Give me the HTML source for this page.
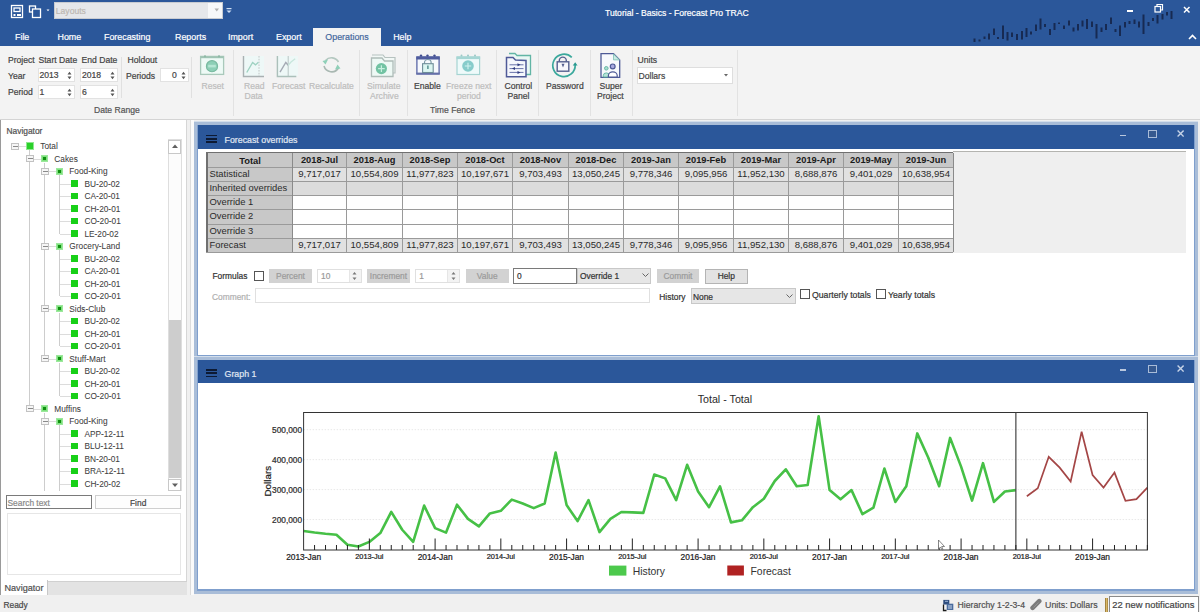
<!DOCTYPE html>
<html><head><meta charset="utf-8"><style>
*{margin:0;padding:0;box-sizing:border-box}
html,body{width:1200px;height:612px;overflow:hidden;background:#f0f0f0;font-family:'Liberation Sans', sans-serif;}
.a{position:absolute}
.t{position:absolute;white-space:nowrap;line-height:1;-webkit-text-stroke:0.2px currentColor}
.n{-webkit-text-stroke:0}
</style></head>
<body>
<div class="a" style="left:0;top:0;width:1200px;height:46px;background:#2b579a"></div>
<svg class="a" style="left:8px;top:3px" width="44" height="18" viewBox="0 0 44 18">
<g fill="none" stroke="#fff" stroke-width="1.3">
<rect x="3.5" y="2.5" width="11" height="12"/>
<rect x="6" y="5" width="6" height="3.5"/>
<rect x="21.5" y="3" width="6" height="6"/>
<rect x="24.5" y="6" width="8" height="8.5" fill="#2b579a"/>
</g>
<rect x="5.5" y="11" width="2" height="2" fill="#fff"/>
<rect x="9" y="11" width="4" height="2" fill="#fff"/>
<path d="M38.5 6.5 L41.5 6.5 L40 8.3 Z" fill="#fff"/>
</svg>
<div class="a" style="left:54px;top:2px;width:169px;height:16.5px;background:#e5e7ea;border:1px solid #c8ccd2"></div>
<div class="a" style="left:208px;top:3px;width:14px;height:14.5px;background:#f7f8f9"></div>
<div class="t" style="left:55.8px;top:7.3px;font-size:8.6px;color:#bdb8b2">Layouts</div>
<svg class="a" style="left:214px;top:8px" width="6" height="4"><path d="M0.5 0.5 L5 0.5 L2.75 3.5Z" fill="#b0b0b0"/></svg>
<svg class="a" style="left:226px;top:7px" width="7" height="7"><rect x="0.5" y="1" width="5" height="1.2" fill="#cfe0f5"/><path d="M0.5 3.5 L5.5 3.5 L3 6Z" fill="#cfe0f5"/></svg>
<div class="t" style="left:605px;top:9.1px;font-size:8.6px;color:#fff">Tutorial - Basics - Forecast Pro TRAC</div>
<div class="a" style="left:1126.5px;top:10px;width:6.5px;height:1.5px;background:#fff"></div>
<svg class="a" style="left:1154px;top:3px" width="10" height="10"><g fill="none" stroke="#fff" stroke-width="1.2"><rect x="1" y="3.5" width="5.5" height="5.5"/><path d="M3 3.5 V1.5 H8.5 V7 H6.5"/></g></svg>
<svg class="a" style="left:1183px;top:5.5px" width="8" height="8"><path d="M1 1 L6.5 6.5 M6.5 1 L1 6.5" stroke="#fff" stroke-width="1.5"/></svg>
<svg class="a" style="left:1188px;top:34px" width="9" height="6"><path d="M1 5 L4.5 1.5 L8 5" fill="none" stroke="#fff" stroke-width="1.6"/></svg>
<svg class="a" style="left:960px;top:0px" width="220" height="46"><rect x="13.5" y="38.5" width="2" height="3.5" fill="#172a52"/><rect x="18.5" y="39.5" width="2" height="2.0" fill="#172a52"/><rect x="23.5" y="36.5" width="2" height="2.5" fill="#172a52"/><rect x="28.0" y="33.5" width="2" height="6.0" fill="#172a52"/><rect x="33.0" y="28.5" width="2" height="6.5" fill="#172a52"/><rect x="37.0" y="37.0" width="2" height="2.0" fill="#172a52"/><rect x="42.0" y="25.5" width="2" height="13.5" fill="#172a52"/><rect x="46.5" y="32.0" width="2" height="8.5" fill="#172a52"/><rect x="51.0" y="32.5" width="2" height="4.5" fill="#172a52"/><rect x="56.0" y="34.0" width="2" height="6.0" fill="#172a52"/><rect x="61.0" y="31.0" width="2" height="8.5" fill="#172a52"/><rect x="65.5" y="28.0" width="2" height="9.0" fill="#172a52"/><rect x="70.0" y="31.5" width="2" height="3.0" fill="#172a52"/><rect x="75.0" y="24.5" width="2" height="6.5" fill="#172a52"/><rect x="79.5" y="18.5" width="2" height="11.0" fill="#172a52"/><rect x="84.0" y="24.0" width="2" height="3.0" fill="#172a52"/><rect x="89.0" y="29.0" width="2" height="6.0" fill="#172a52"/><rect x="93.5" y="23.0" width="2" height="7.0" fill="#172a52"/><rect x="98.0" y="22.5" width="2" height="1.5" fill="#172a52"/><rect x="103.0" y="25.5" width="2" height="3.5" fill="#172a52"/><rect x="108.0" y="20.5" width="2" height="5.0" fill="#172a52"/><rect x="112.5" y="27.5" width="2" height="4.0" fill="#172a52"/><rect x="117.0" y="24.0" width="2" height="6.5" fill="#172a52"/><rect x="121.5" y="20.5" width="2" height="6.0" fill="#172a52"/><rect x="126.0" y="19.0" width="2" height="10.0" fill="#172a52"/><rect x="131.0" y="21.5" width="2" height="5.5" fill="#172a52"/><rect x="135.5" y="24.0" width="2" height="14.5" fill="#172a52"/><rect x="140.5" y="27.5" width="2" height="4.5" fill="#172a52"/><rect x="145.0" y="24.0" width="2" height="6.0" fill="#172a52"/><rect x="150.0" y="17.5" width="2" height="6.5" fill="#172a52"/><rect x="154.5" y="29.0" width="2" height="3.0" fill="#172a52"/><rect x="159.0" y="25.5" width="2" height="10.5" fill="#172a52"/><rect x="164.0" y="22.0" width="2" height="5.5" fill="#172a52"/><rect x="168.5" y="21.0" width="2" height="3.0" fill="#172a52"/><rect x="173.5" y="19.5" width="2" height="4.5" fill="#172a52"/><rect x="178.0" y="21.5" width="2" height="6.0" fill="#172a52"/><rect x="182.5" y="14.5" width="2" height="19.5" fill="#172a52"/><rect x="187.5" y="22.0" width="2" height="4.0" fill="#172a52"/><rect x="192.0" y="18.0" width="2" height="3.0" fill="#172a52"/><rect x="196.5" y="15.0" width="2" height="8.5" fill="#172a52"/><rect x="201.5" y="14.0" width="2" height="5.5" fill="#172a52"/><rect x="206.0" y="12.0" width="2" height="3.5" fill="#172a52"/><rect x="210.5" y="11.0" width="2" height="8.0" fill="#172a52"/></svg>
<div class="t" style="left:15px;top:33.3px;font-size:8.9px;color:#fff">File</div>
<div class="t" style="left:57.5px;top:33.3px;font-size:8.9px;color:#fff">Home</div>
<div class="t" style="left:104px;top:33.3px;font-size:8.9px;color:#fff">Forecasting</div>
<div class="t" style="left:175px;top:33.3px;font-size:8.9px;color:#fff">Reports</div>
<div class="t" style="left:228px;top:33.3px;font-size:8.9px;color:#fff">Import</div>
<div class="t" style="left:276px;top:33.3px;font-size:8.9px;color:#fff">Export</div>
<div class="t" style="left:393.2px;top:33.3px;font-size:8.9px;color:#fff">Help</div>
<div class="a" style="left:313px;top:28.1px;width:68px;height:19px;background:#f3f3f3"></div>
<div class="t" style="left:325.3px;top:33.3px;font-size:8.9px;color:#45689e">Operations</div>
<div class="a" style="left:0;top:46px;width:1200px;height:73px;background:#f3f3f3"></div>
<div class="a" style="left:0;top:119px;width:1200px;height:1px;background:#d4d4d4"></div>
<div class="t" style="left:8px;top:55.5px;font-size:8.6px;color:#444;font-weight:400;">Project</div>
<div class="t" style="left:38.5px;top:55.5px;font-size:8.6px;color:#444;font-weight:400;">Start Date</div>
<div class="t" style="left:81.5px;top:55.5px;font-size:8.6px;color:#444;font-weight:400;">End Date</div>
<div class="t" style="left:8px;top:72.2px;font-size:8.6px;color:#444;font-weight:400;">Year</div>
<div class="t" style="left:8px;top:88.3px;font-size:8.6px;color:#444;font-weight:400;">Period</div>
<div class="a" style="left:37.5px;top:67.8px;width:37px;height:14px;background:#fff;border:1px solid #e2e2e2"></div>
<div class="t" style="left:39.5px;top:71.3px;font-size:8.6px;color:#444;font-weight:400;">2013</div>
<svg class="a" style="left:66.5px;top:70.8px" width="5" height="9"><path d="M0.5 3.5 L4.5 3.5 L2.5 0.8Z M0.5 5.5 L4.5 5.5 L2.5 8.2Z" fill="#555"/></svg>
<div class="a" style="left:80px;top:67.8px;width:38px;height:14px;background:#fff;border:1px solid #e2e2e2"></div>
<div class="t" style="left:82px;top:71.3px;font-size:8.6px;color:#444;font-weight:400;">2018</div>
<svg class="a" style="left:110px;top:70.8px" width="5" height="9"><path d="M0.5 3.5 L4.5 3.5 L2.5 0.8Z M0.5 5.5 L4.5 5.5 L2.5 8.2Z" fill="#555"/></svg>
<div class="a" style="left:37.5px;top:84.8px;width:37px;height:14px;background:#fff;border:1px solid #e2e2e2"></div>
<div class="t" style="left:39.5px;top:88.3px;font-size:8.6px;color:#444;font-weight:400;">1</div>
<svg class="a" style="left:66.5px;top:87.8px" width="5" height="9"><path d="M0.5 3.5 L4.5 3.5 L2.5 0.8Z M0.5 5.5 L4.5 5.5 L2.5 8.2Z" fill="#555"/></svg>
<div class="a" style="left:80px;top:84.8px;width:38px;height:14px;background:#fff;border:1px solid #e2e2e2"></div>
<div class="t" style="left:82px;top:88.3px;font-size:8.6px;color:#444;font-weight:400;">6</div>
<svg class="a" style="left:110px;top:87.8px" width="5" height="9"><path d="M0.5 3.5 L4.5 3.5 L2.5 0.8Z M0.5 5.5 L4.5 5.5 L2.5 8.2Z" fill="#555"/></svg>
<div class="a" style="left:121px;top:57px;width:1px;height:41px;background:#e0e0e0"></div>
<div class="t" style="left:127.5px;top:55.5px;font-size:8.6px;color:#444;font-weight:400;">Holdout</div>
<div class="t" style="left:126px;top:72.2px;font-size:8.6px;color:#444;font-weight:400;">Periods</div>
<div class="a" style="left:159.5px;top:67.8px;width:29px;height:14px;background:#fff;border:1px solid #e2e2e2"></div>
<div class="t" style="left:172.0px;top:71.3px;font-size:8.6px;color:#444;font-weight:400;">0</div>
<svg class="a" style="left:180.5px;top:70.8px" width="5" height="9"><path d="M0.5 3.5 L4.5 3.5 L2.5 0.8Z M0.5 5.5 L4.5 5.5 L2.5 8.2Z" fill="#555"/></svg>
<div class="a" style="left:191px;top:57px;width:1px;height:41px;background:#e0e0e0"></div>
<div class="t" style="left:94px;top:106px;font-size:8.6px;color:#555;font-weight:400;">Date Range</div>
<div class="a" style="left:233px;top:50px;width:1px;height:66px;background:#e2e2e2"></div>
<div class="a" style="left:359px;top:50px;width:1px;height:66px;background:#e2e2e2"></div>
<div class="a" style="left:407px;top:50px;width:1px;height:66px;background:#e2e2e2"></div>
<div class="a" style="left:496px;top:50px;width:1px;height:66px;background:#e2e2e2"></div>
<div class="a" style="left:538px;top:50px;width:1px;height:66px;background:#e2e2e2"></div>
<div class="a" style="left:589.5px;top:50px;width:1px;height:66px;background:#e2e2e2"></div>
<div class="a" style="left:631.5px;top:50px;width:1px;height:66px;background:#e2e2e2"></div>
<div class="a" style="left:736.5px;top:50px;width:1px;height:66px;background:#e2e2e2"></div>
<div class="t" style="left:201.5px;top:82px;font-size:8.6px;color:#bdbdbd;font-weight:400;">Reset</div>
<div class="t" style="left:244px;top:82px;font-size:8.6px;color:#bdbdbd;font-weight:400;">Read</div>
<div class="t" style="left:244.5px;top:92px;font-size:8.6px;color:#bdbdbd;font-weight:400;">Data</div>
<div class="t" style="left:272px;top:82px;font-size:8.6px;color:#bdbdbd;font-weight:400;">Forecast</div>
<div class="t" style="left:309px;top:82px;font-size:8.6px;color:#bdbdbd;font-weight:400;">Recalculate</div>
<div class="t" style="left:367px;top:82px;font-size:8.6px;color:#bdbdbd;font-weight:400;">Simulate</div>
<div class="t" style="left:370px;top:92px;font-size:8.6px;color:#bdbdbd;font-weight:400;">Archive</div>
<div class="t" style="left:414px;top:82px;font-size:8.6px;color:#444;font-weight:400;">Enable</div>
<div class="t" style="left:446px;top:82px;font-size:8.6px;color:#bdbdbd;font-weight:400;">Freeze next</div>
<div class="t" style="left:457px;top:92px;font-size:8.6px;color:#bdbdbd;font-weight:400;">period</div>
<div class="t" style="left:430px;top:106px;font-size:8.6px;color:#555;font-weight:400;">Time Fence</div>
<div class="t" style="left:504.5px;top:82px;font-size:8.6px;color:#444;font-weight:400;">Control</div>
<div class="t" style="left:507.5px;top:92px;font-size:8.6px;color:#444;font-weight:400;">Panel</div>
<div class="t" style="left:546px;top:82px;font-size:8.6px;color:#444;font-weight:400;">Password</div>
<div class="t" style="left:599.5px;top:82px;font-size:8.6px;color:#444;font-weight:400;">Super</div>
<div class="t" style="left:597px;top:92px;font-size:8.6px;color:#444;font-weight:400;">Project</div>
<div class="t" style="left:637.5px;top:55.5px;font-size:8.6px;color:#444;font-weight:400;">Units</div>
<div class="a" style="left:636.5px;top:67px;width:96px;height:17px;background:#fff;border:1px solid #dedede"></div>
<div class="t" style="left:638.5px;top:71.5px;font-size:8.6px;color:#444;font-weight:400;">Dollars</div>
<svg class="a" style="left:724px;top:74px" width="5" height="3"><path d="M0 0 L4 0 L2 2.5Z" fill="#666"/></svg>
<svg class="a" style="left:199px;top:54px" width="26" height="22" viewBox="0 0 26 22">
<rect x="1.6" y="2.4" width="23" height="18" fill="#eefaf6" stroke="#a9c9bb" stroke-width="1.3"/>
<rect x="1.6" y="2.4" width="23" height="1.8" fill="#9fc4b4"/>
<circle cx="6" cy="2.3" r="1.1" fill="#8fb8a6"/><circle cx="20" cy="2.3" r="1.1" fill="#8fb8a6"/>
<circle cx="13" cy="12.2" r="5.6" fill="#8ccfb6"/>
<circle cx="13" cy="12.2" r="5.6" fill="none" stroke="#79b9a0" stroke-width="1.1"/>
<rect x="9.2" y="10.8" width="7.6" height="2.6" fill="#b6e6d4"/>
</svg>
<svg class="a" style="left:238px;top:50px" width="70" height="30" viewBox="0 0 70 30">
<rect x="6" y="6" width="20" height="20" fill="#eef8f7"/>
<path d="M21 6 V26" stroke="#c0c6c6" stroke-width="1" stroke-dasharray="1.6 1.2"/>
<path d="M8.75 22.5 L14.6 12.5 L17.5 14.9 L20.4 12.25" fill="none" stroke="#9fd2c2" stroke-width="1.4"/>
<path d="M5.5 6 V26.5 H26" fill="none" stroke="#a9b0b2" stroke-width="1.4"/>
<rect x="40" y="6" width="20" height="20" fill="#eef8f7"/>
<path d="M50.2 6 V26" stroke="#b9c6c4" stroke-width="1"/>
<path d="M42 22.2 L47.8 12.5 L50.2 15.2" fill="none" stroke="#a4aab4" stroke-width="1.4"/>
<path d="M50.2 15.2 L53 12 L57.2 8.75" fill="none" stroke="#c7e6dc" stroke-width="1.3"/>
<path d="M39.4 6 V26.5 H58.3" fill="none" stroke="#abc0ba" stroke-width="1.4"/>
</svg>
<svg class="a" style="left:312px;top:48px" width="90" height="32" viewBox="0 0 90 32">
<path d="M13.5 12.5 A8 8 0 0 1 26.5 14" fill="none" stroke="#b4c8c0" stroke-width="1.6"/>
<path d="M26.5 20 A8 8 0 0 1 12 18" fill="none" stroke="#a9b8b2" stroke-width="1.6"/>
<path d="M10.5 13 L16 11.5 L13.5 16.5Z" fill="#8fd0b8"/>
<path d="M28.5 20.5 L23 21.5 L25.5 16.5Z" fill="#8fd0b8"/>
<path d="M60 7 H71 L73 9.5 H83 V25 H72" fill="#f2f8f6" stroke="#b6c2bf" stroke-width="1.2"/>
<path d="M59.5 10 H70 L72.5 13 H81 V28.5 H59.5Z" fill="#eef9f5" stroke="#aebcb8" stroke-width="1.3"/>
<circle cx="69.4" cy="20.6" r="5.6" fill="#72c3a3"/>
<path d="M69.4 17.3 V23.9 M66.1 20.6 H72.7" stroke="#c8f0e0" stroke-width="1.2"/>
</svg>
<svg class="a" style="left:410px;top:50px" width="80" height="30" viewBox="0 0 80 30">
<rect x="6.9" y="7" width="22.2" height="17" fill="#f6f9fd" stroke="#5a66a6" stroke-width="1.3"/>
<rect x="6.3" y="6.5" width="23.4" height="3" fill="#4f5c9e"/>
<rect x="6.3" y="22.6" width="23.4" height="1.8" fill="#6570a8"/>
<circle cx="11" cy="5.6" r="1.2" fill="#3f4c8e"/><circle cx="17.5" cy="5.6" r="1.2" fill="#3f4c8e"/><circle cx="24.5" cy="5.6" r="1.2" fill="#3f4c8e"/>
<path d="M14.5 13.7 V12.5 A3.3 3 0 0 1 21.1 12.5 V13.7" fill="none" stroke="#7a9aa6" stroke-width="1.2"/>
<rect x="12.6" y="13.7" width="10.6" height="8.8" fill="#dcf6f2" stroke="#6d8c98" stroke-width="1.1"/>
<path d="M17.9 15.5 V19" stroke="#4d8a8a" stroke-width="1.4"/>
<rect x="47" y="7" width="22.6" height="17.5" fill="#eefafa" stroke="#a6d4d2" stroke-width="1.2"/>
<rect x="46.5" y="6.5" width="23.6" height="2.6" fill="#a6d6d4"/>
<circle cx="51.5" cy="5.6" r="1" fill="#9cc8c6"/><circle cx="58" cy="5.6" r="1" fill="#9cc8c6"/><circle cx="65" cy="5.6" r="1" fill="#9cc8c6"/>
<circle cx="58" cy="16" r="5.8" fill="#86cccb"/>
<path d="M58 12.8 V19.2 M54.8 16 H61.2" stroke="#d0f2f0" stroke-width="1.1"/>
</svg>
<svg class="a" style="left:504px;top:52px" width="30" height="26" viewBox="0 0 30 26">
<path d="M5 1.5 H11 L13 3.5 H26.5 V22.5 H22" fill="#e9f7f4" stroke="#62b5a5" stroke-width="1.3"/>
<path d="M2.5 5.5 H9 L11.5 8 L22 8.5 V24.8 H2.5Z" fill="#f5f7fc" stroke="#4f5a98" stroke-width="1.5"/>
<path d="M5.5 12.8 H19.5 M5.5 16.6 H19.5 M5.5 20.4 H19.5" stroke="#5a64a0" stroke-width="0.9"/>
<path d="M13.5 11.3 L16.5 12.8 L13.5 14.3Z M11 15.1 L8 16.6 L11 18.1Z M13.5 18.9 L16.5 20.4 L13.5 21.9Z" fill="#2e3a7e"/>
</svg>
<svg class="a" style="left:545px;top:50px" width="80" height="30" viewBox="0 0 80 30">
<path d="M26.78 7.34 A11.2 11.2 0 1 0 30.18 14.81" fill="none" stroke="#3aa89c" stroke-width="1.7"/>
<path d="M27.78 15.61 L30.18 12.21 L32.58 15.61Z" fill="#2a9a90"/>
<path d="M14.3 11.8 V10.6 A3.5 3.5 0 0 1 21.3 10.6 V11.8" fill="none" stroke="#55608f" stroke-width="1.4"/>
<rect x="12.2" y="11.8" width="11.6" height="9.4" fill="#f8f8fc" stroke="#55608f" stroke-width="1.4"/>
<path d="M16.5 13.8 H19.5 L18 17.5Z" fill="#55608f"/>
<path d="M56 3.7 H68.5 L74.7 9.9 V27.3 H56Z" fill="#f7f9fc" stroke="#4e5a96" stroke-width="1.3"/>
<path d="M68.5 4 V9.9 H74.5Z" fill="#c9ebe4" stroke="#7cc0b2" stroke-width="0.8"/>
<circle cx="61.3" cy="18.3" r="1.8" fill="#a6dccd" stroke="#5fb3a2" stroke-width="0.9"/>
<path d="M58.3 27 V25.5 A3 2.6 0 0 1 64.3 25.5 V27Z" fill="#b7e4d8" stroke="#5fb3a2" stroke-width="0.9"/>
<circle cx="67.7" cy="16.4" r="2.4" fill="#a9a9e0" stroke="#4e5a96" stroke-width="1.2"/>
<path d="M63.4 27 V25.6 A4.4 3.8 0 0 1 72.2 25.6 V27Z" fill="#ffffff" stroke="#4e5a96" stroke-width="1.2"/>
</svg>
<div class="a" style="left:0;top:120px;width:186.3px;height:461px;background:#fff;border-left:1px solid #a0a0a0"></div>
<div class="a" style="left:186px;top:120px;width:1px;height:475px;background:#d6d6d6"></div>
<div class="a" style="left:190px;top:120px;width:1px;height:475px;background:#dcdcdc"></div>
<div class="a" style="left:191px;top:120px;width:3px;height:475px;background:#fafafa"></div>
<div class="t" style="left:6.5px;top:127px;font-size:8.4px;color:#505050;font-weight:400;">Navigator</div>
<div class="a" style="left:1px;top:138px;width:166px;height:353px;overflow:hidden"><div class="a" style="left:27.8px;top:12px;width:1px;height:258.5px;background:#cdcdcd"></div><div class="a" style="left:42.8px;top:24.5px;width:1px;height:196.0px;background:#cdcdcd"></div><div class="a" style="left:42.8px;top:274.5px;width:1px;height:187.5px;background:#cdcdcd"></div><div class="a" style="left:57.8px;top:37.0px;width:1px;height:58.5px;background:#cdcdcd"></div><div class="a" style="left:57.8px;top:112.0px;width:1px;height:46.0px;background:#cdcdcd"></div><div class="a" style="left:57.8px;top:174.5px;width:1px;height:33.5px;background:#cdcdcd"></div><div class="a" style="left:57.8px;top:224.5px;width:1px;height:33.5px;background:#cdcdcd"></div><div class="a" style="left:57.8px;top:287.0px;width:1px;height:175.0px;background:#cdcdcd"></div><div class="a" style="left:18px;top:8.0px;width:6.5px;height:1px;background:#dcdcdc"></div><div class="a" style="left:10px;top:4.5px;width:8px;height:7px;background:#f6f6f6;border:1px solid #c2c2c2"></div><div class="a" style="left:11.5px;top:7.5px;width:5px;height:1px;background:#8a8a8a"></div><div class="a" style="left:24.5px;top:4.199999999999989px;width:8px;height:7.5px;background:#2ad02a;border:1px solid #8fe88f"></div><div class="t" style="left:39.3px;top:4.199999999999989px;font-size:8.3px;color:#404040;-webkit-text-stroke:0.05px #404040">Total</div><div class="a" style="left:33px;top:20.5px;width:6.5px;height:1px;background:#dcdcdc"></div><div class="a" style="left:25px;top:17.0px;width:8px;height:7px;background:#f6f6f6;border:1px solid #c2c2c2"></div><div class="a" style="left:26.5px;top:20.0px;width:5px;height:1px;background:#8a8a8a"></div><div class="a" style="left:39.7px;top:17.0px;width:7.5px;height:7px;background:#7ee07e;border:1px solid #9ce89c"></div><div class="a" style="left:42.0px;top:19.0px;width:3px;height:3px;background:#109010"></div><div class="t" style="left:53.3px;top:16.69999999999999px;font-size:8.3px;color:#404040;-webkit-text-stroke:0.05px #404040">Cakes</div><div class="a" style="left:48px;top:33.0px;width:6.5px;height:1px;background:#dcdcdc"></div><div class="a" style="left:40px;top:29.5px;width:8px;height:7px;background:#f6f6f6;border:1px solid #c2c2c2"></div><div class="a" style="left:41.5px;top:32.5px;width:5px;height:1px;background:#8a8a8a"></div><div class="a" style="left:54.7px;top:29.5px;width:7.5px;height:7px;background:#7ee07e;border:1px solid #9ce89c"></div><div class="a" style="left:57.0px;top:31.5px;width:3px;height:3px;background:#109010"></div><div class="t" style="left:68.3px;top:29.19999999999999px;font-size:8.3px;color:#404040;-webkit-text-stroke:0.05px #404040">Food-King</div><div class="a" style="left:58.5px;top:45.5px;width:11.099999999999994px;height:1px;background:#dcdcdc"></div><div class="a" style="left:70.1px;top:42.30000000000001px;width:7px;height:6.5px;background:#18d018"></div><div class="t" style="left:83.4px;top:41.69999999999999px;font-size:8.3px;color:#404040;-webkit-text-stroke:0.05px #404040">BU-20-02</div><div class="a" style="left:58.5px;top:58.0px;width:11.099999999999994px;height:1px;background:#dcdcdc"></div><div class="a" style="left:70.1px;top:54.80000000000001px;width:7px;height:6.5px;background:#18d018"></div><div class="t" style="left:83.4px;top:54.19999999999999px;font-size:8.3px;color:#404040;-webkit-text-stroke:0.05px #404040">CA-20-01</div><div class="a" style="left:58.5px;top:70.5px;width:11.099999999999994px;height:1px;background:#dcdcdc"></div><div class="a" style="left:70.1px;top:67.30000000000001px;width:7px;height:6.5px;background:#18d018"></div><div class="t" style="left:83.4px;top:66.69999999999999px;font-size:8.3px;color:#404040;-webkit-text-stroke:0.05px #404040">CH-20-01</div><div class="a" style="left:58.5px;top:83.0px;width:11.099999999999994px;height:1px;background:#dcdcdc"></div><div class="a" style="left:70.1px;top:79.80000000000001px;width:7px;height:6.5px;background:#18d018"></div><div class="t" style="left:83.4px;top:79.19999999999999px;font-size:8.3px;color:#404040;-webkit-text-stroke:0.05px #404040">CO-20-01</div><div class="a" style="left:58.5px;top:95.5px;width:11.099999999999994px;height:1px;background:#dcdcdc"></div><div class="a" style="left:70.1px;top:92.30000000000001px;width:7px;height:6.5px;background:#18d018"></div><div class="t" style="left:83.4px;top:91.69999999999999px;font-size:8.3px;color:#404040;-webkit-text-stroke:0.05px #404040">LE-20-02</div><div class="a" style="left:48px;top:108.0px;width:6.5px;height:1px;background:#dcdcdc"></div><div class="a" style="left:40px;top:104.5px;width:8px;height:7px;background:#f6f6f6;border:1px solid #c2c2c2"></div><div class="a" style="left:41.5px;top:107.5px;width:5px;height:1px;background:#8a8a8a"></div><div class="a" style="left:54.7px;top:104.5px;width:7.5px;height:7px;background:#7ee07e;border:1px solid #9ce89c"></div><div class="a" style="left:57.0px;top:106.5px;width:3px;height:3px;background:#109010"></div><div class="t" style="left:68.3px;top:104.19999999999999px;font-size:8.3px;color:#404040;-webkit-text-stroke:0.05px #404040">Grocery-Land</div><div class="a" style="left:58.5px;top:120.5px;width:11.099999999999994px;height:1px;background:#dcdcdc"></div><div class="a" style="left:70.1px;top:117.30000000000001px;width:7px;height:6.5px;background:#18d018"></div><div class="t" style="left:83.4px;top:116.69999999999999px;font-size:8.3px;color:#404040;-webkit-text-stroke:0.05px #404040">BU-20-02</div><div class="a" style="left:58.5px;top:133.0px;width:11.099999999999994px;height:1px;background:#dcdcdc"></div><div class="a" style="left:70.1px;top:129.8px;width:7px;height:6.5px;background:#18d018"></div><div class="t" style="left:83.4px;top:129.2px;font-size:8.3px;color:#404040;-webkit-text-stroke:0.05px #404040">CA-20-01</div><div class="a" style="left:58.5px;top:145.5px;width:11.099999999999994px;height:1px;background:#dcdcdc"></div><div class="a" style="left:70.1px;top:142.3px;width:7px;height:6.5px;background:#18d018"></div><div class="t" style="left:83.4px;top:141.7px;font-size:8.3px;color:#404040;-webkit-text-stroke:0.05px #404040">CH-20-01</div><div class="a" style="left:58.5px;top:158.0px;width:11.099999999999994px;height:1px;background:#dcdcdc"></div><div class="a" style="left:70.1px;top:154.8px;width:7px;height:6.5px;background:#18d018"></div><div class="t" style="left:83.4px;top:154.2px;font-size:8.3px;color:#404040;-webkit-text-stroke:0.05px #404040">CO-20-01</div><div class="a" style="left:48px;top:170.5px;width:6.5px;height:1px;background:#dcdcdc"></div><div class="a" style="left:40px;top:167.0px;width:8px;height:7px;background:#f6f6f6;border:1px solid #c2c2c2"></div><div class="a" style="left:41.5px;top:170.0px;width:5px;height:1px;background:#8a8a8a"></div><div class="a" style="left:54.7px;top:167.0px;width:7.5px;height:7px;background:#7ee07e;border:1px solid #9ce89c"></div><div class="a" style="left:57.0px;top:169.0px;width:3px;height:3px;background:#109010"></div><div class="t" style="left:68.3px;top:166.7px;font-size:8.3px;color:#404040;-webkit-text-stroke:0.05px #404040">Sids-Club</div><div class="a" style="left:58.5px;top:183.0px;width:11.099999999999994px;height:1px;background:#dcdcdc"></div><div class="a" style="left:70.1px;top:179.8px;width:7px;height:6.5px;background:#18d018"></div><div class="t" style="left:83.4px;top:179.2px;font-size:8.3px;color:#404040;-webkit-text-stroke:0.05px #404040">BU-20-02</div><div class="a" style="left:58.5px;top:195.5px;width:11.099999999999994px;height:1px;background:#dcdcdc"></div><div class="a" style="left:70.1px;top:192.3px;width:7px;height:6.5px;background:#18d018"></div><div class="t" style="left:83.4px;top:191.7px;font-size:8.3px;color:#404040;-webkit-text-stroke:0.05px #404040">CH-20-01</div><div class="a" style="left:58.5px;top:208.0px;width:11.099999999999994px;height:1px;background:#dcdcdc"></div><div class="a" style="left:70.1px;top:204.8px;width:7px;height:6.5px;background:#18d018"></div><div class="t" style="left:83.4px;top:204.2px;font-size:8.3px;color:#404040;-webkit-text-stroke:0.05px #404040">CO-20-01</div><div class="a" style="left:48px;top:220.5px;width:6.5px;height:1px;background:#dcdcdc"></div><div class="a" style="left:40px;top:217.0px;width:8px;height:7px;background:#f6f6f6;border:1px solid #c2c2c2"></div><div class="a" style="left:41.5px;top:220.0px;width:5px;height:1px;background:#8a8a8a"></div><div class="a" style="left:54.7px;top:217.0px;width:7.5px;height:7px;background:#7ee07e;border:1px solid #9ce89c"></div><div class="a" style="left:57.0px;top:219.0px;width:3px;height:3px;background:#109010"></div><div class="t" style="left:68.3px;top:216.7px;font-size:8.3px;color:#404040;-webkit-text-stroke:0.05px #404040">Stuff-Mart</div><div class="a" style="left:58.5px;top:233.0px;width:11.099999999999994px;height:1px;background:#dcdcdc"></div><div class="a" style="left:70.1px;top:229.8px;width:7px;height:6.5px;background:#18d018"></div><div class="t" style="left:83.4px;top:229.2px;font-size:8.3px;color:#404040;-webkit-text-stroke:0.05px #404040">BU-20-02</div><div class="a" style="left:58.5px;top:245.5px;width:11.099999999999994px;height:1px;background:#dcdcdc"></div><div class="a" style="left:70.1px;top:242.3px;width:7px;height:6.5px;background:#18d018"></div><div class="t" style="left:83.4px;top:241.7px;font-size:8.3px;color:#404040;-webkit-text-stroke:0.05px #404040">CH-20-01</div><div class="a" style="left:58.5px;top:258.0px;width:11.099999999999994px;height:1px;background:#dcdcdc"></div><div class="a" style="left:70.1px;top:254.8px;width:7px;height:6.5px;background:#18d018"></div><div class="t" style="left:83.4px;top:254.2px;font-size:8.3px;color:#404040;-webkit-text-stroke:0.05px #404040">CO-20-01</div><div class="a" style="left:33px;top:270.5px;width:6.5px;height:1px;background:#dcdcdc"></div><div class="a" style="left:25px;top:267.0px;width:8px;height:7px;background:#f6f6f6;border:1px solid #c2c2c2"></div><div class="a" style="left:26.5px;top:270.0px;width:5px;height:1px;background:#8a8a8a"></div><div class="a" style="left:39.7px;top:267.0px;width:7.5px;height:7px;background:#7ee07e;border:1px solid #9ce89c"></div><div class="a" style="left:42.0px;top:269.0px;width:3px;height:3px;background:#109010"></div><div class="t" style="left:53.3px;top:266.7px;font-size:8.3px;color:#404040;-webkit-text-stroke:0.05px #404040">Muffins</div><div class="a" style="left:48px;top:283.0px;width:6.5px;height:1px;background:#dcdcdc"></div><div class="a" style="left:40px;top:279.5px;width:8px;height:7px;background:#f6f6f6;border:1px solid #c2c2c2"></div><div class="a" style="left:41.5px;top:282.5px;width:5px;height:1px;background:#8a8a8a"></div><div class="a" style="left:54.7px;top:279.5px;width:7.5px;height:7px;background:#7ee07e;border:1px solid #9ce89c"></div><div class="a" style="left:57.0px;top:281.5px;width:3px;height:3px;background:#109010"></div><div class="t" style="left:68.3px;top:279.2px;font-size:8.3px;color:#404040;-webkit-text-stroke:0.05px #404040">Food-King</div><div class="a" style="left:58.5px;top:295.5px;width:11.099999999999994px;height:1px;background:#dcdcdc"></div><div class="a" style="left:70.1px;top:292.3px;width:7px;height:6.5px;background:#18d018"></div><div class="t" style="left:83.4px;top:291.7px;font-size:8.3px;color:#404040;-webkit-text-stroke:0.05px #404040">APP-12-11</div><div class="a" style="left:58.5px;top:308.0px;width:11.099999999999994px;height:1px;background:#dcdcdc"></div><div class="a" style="left:70.1px;top:304.8px;width:7px;height:6.5px;background:#18d018"></div><div class="t" style="left:83.4px;top:304.2px;font-size:8.3px;color:#404040;-webkit-text-stroke:0.05px #404040">BLU-12-11</div><div class="a" style="left:58.5px;top:320.5px;width:11.099999999999994px;height:1px;background:#dcdcdc"></div><div class="a" style="left:70.1px;top:317.3px;width:7px;height:6.5px;background:#18d018"></div><div class="t" style="left:83.4px;top:316.7px;font-size:8.3px;color:#404040;-webkit-text-stroke:0.05px #404040">BN-20-01</div><div class="a" style="left:58.5px;top:333.0px;width:11.099999999999994px;height:1px;background:#dcdcdc"></div><div class="a" style="left:70.1px;top:329.8px;width:7px;height:6.5px;background:#18d018"></div><div class="t" style="left:83.4px;top:329.2px;font-size:8.3px;color:#404040;-webkit-text-stroke:0.05px #404040">BRA-12-11</div><div class="a" style="left:58.5px;top:345.5px;width:11.099999999999994px;height:1px;background:#dcdcdc"></div><div class="a" style="left:70.1px;top:342.3px;width:7px;height:6.5px;background:#18d018"></div><div class="t" style="left:83.4px;top:341.7px;font-size:8.3px;color:#404040;-webkit-text-stroke:0.05px #404040">CH-20-02</div></div>
<div class="a" style="left:167.5px;top:139px;width:14px;height:352px;background:#fcfcfc;border:1px solid #dedede"></div>
<div class="a" style="left:168.5px;top:320px;width:12px;height:158px;background:#cdcdcd"></div>
<div class="a" style="left:168px;top:139.5px;width:13px;height:14px;background:#fff;border:1px solid #c8c8c8"></div>
<svg class="a" style="left:171.5px;top:144px" width="7" height="5"><path d="M0 4 L6 4 L3 0.5Z" fill="#606060"/></svg>
<div class="a" style="left:168px;top:479px;width:13px;height:12px;background:#fff;border:1px solid #c8c8c8"></div>
<svg class="a" style="left:171.5px;top:483px" width="7" height="5"><path d="M0 0.5 L6 0.5 L3 4Z" fill="#606060"/></svg>
<div class="a" style="left:6px;top:495px;width:86px;height:13.5px;background:#fff;border:1px solid #7a7a7a"></div>
<div class="t" style="left:7.5px;top:498.5px;font-size:8.4px;color:#888;font-weight:400;">Search text</div>
<div class="a" style="left:95px;top:495px;width:86px;height:13.5px;background:#fdfdfd;border:1px solid #cfcfcf"></div>
<div class="t" style="left:130px;top:498.5px;font-size:8.4px;color:#444;font-weight:400;">Find</div>
<div class="a" style="left:6.5px;top:512.5px;width:174px;height:62.5px;background:#fff;border:1px solid #e6e6e6"></div>
<div class="a" style="left:1px;top:580.5px;width:186px;height:14.5px;background:#e3e3e3;border-top:1px solid #d0d0d0"></div>
<div class="a" style="left:1px;top:580px;width:47px;height:15px;background:#fff;border-right:1px solid #c8c8c8"></div>
<div class="t" style="left:4.5px;top:583.8px;font-size:9.1px;color:#505050;font-weight:400;">Navigator</div>
<div class="a" style="left:0;top:120px;width:1px;height:475px;background:#9a9a9a"></div>
<div class="a" style="left:0;top:594.5px;width:48px;height:1px;background:#c4c4c4"></div>
<div class="a" style="left:0;top:595px;width:1200px;height:17px;background:#f0f0f0"></div>
<div class="t" style="left:3.5px;top:601.2px;font-size:8.4px;color:#484848;font-weight:400;">Ready</div>
<svg class="a" style="left:942px;top:598px" width="14" height="14" viewBox="0 0 14 14">
<rect x="1.3" y="1.9" width="6" height="4.6" fill="#2f4d7e"/>
<rect x="3" y="2.8" width="3" height="1" fill="#9fb6d6"/>
<path d="M1.5 6.5 V12.5 H4.5" stroke="#1a1a1a" stroke-width="1.3" fill="none"/>
<rect x="4.7" y="5.7" width="6.6" height="6.3" fill="#4a6c9e"/>
<rect x="6" y="7.5" width="4" height="1" fill="#c8d6ea"/><rect x="6" y="9.5" width="4" height="1" fill="#c8d6ea"/>
</svg>
<div class="t" style="left:957.5px;top:601px;font-size:8.7px;color:#505050;font-weight:400;">Hierarchy 1-2-3-4</div>
<svg class="a" style="left:1029px;top:598px" width="14" height="14" viewBox="0 0 14 14">
<rect x="4.6" y="-0.5" width="4.6" height="14" rx="2.3" transform="rotate(45 6.9 6.5)" fill="#7c7c7c"/>
<path d="M4.5 9.5 L9.5 4.5" stroke="#9a9a9a" stroke-width="0.8"/></svg>
<div class="t" style="left:1045px;top:601px;font-size:8.85px;color:#505050;font-weight:400;">Units: Dollars</div>
<div class="a" style="left:1105px;top:598px;width:3.3px;height:14px;background:linear-gradient(90deg,#8a6a2a,#d8b868,#9a7a3a)"></div>
<div class="a" style="left:1108.5px;top:596.3px;width:90.5px;height:16px;background:#fff;border:1px solid #8a8a8a;border-bottom:none"></div>
<div class="t" style="left:1112.3px;top:600.5px;font-size:9.35px;color:#444;font-weight:400;">22 new notifications</div>
<div class="a" style="left:194px;top:120.6px;width:1004px;height:236.9px;background:#a9bdd8;border-top:1px solid #d3deeb"></div>
<div class="a" style="left:196.6px;top:125.2px;width:998.8px;height:231.8px;background:#7f9fcd"></div>
<div class="a" style="left:198.3px;top:125.2px;width:995.5px;height:230.3px;background:#fff"></div>
<div class="a" style="left:198.3px;top:125.2px;width:995.5px;height:23.4px;background:#2b579a"></div>
<div class="a" style="left:205.8px;top:134.6px;width:11.7px;height:1.8px;background:#0d1a33"></div>
<div class="a" style="left:205.8px;top:137.95px;width:11.7px;height:1.8px;background:#0d1a33"></div>
<div class="a" style="left:205.8px;top:141.29999999999998px;width:11.7px;height:1.8px;background:#0d1a33"></div>
<div class="t" style="left:224.6px;top:135.5px;font-size:8.8px;color:#e0e8f3">Forecast overrides</div>
<div class="a" style="left:1120.4px;top:134.8px;width:6px;height:1.5px;background:#b9c8de"></div>
<div class="a" style="left:1148px;top:130.1px;width:8.7px;height:8.4px;border:1.4px solid #a9bcd8;border-top-width:1.9px;background:#36598f"></div>
<svg class="a" style="left:1176.6px;top:130.4px" width="7.2" height="7.2"><path d="M0.6 0.6 L6.6 6.6 M6.6 0.6 L0.6 6.6" stroke="#c5d2e6" stroke-width="1.35"/></svg>
<div class="a" style="left:194px;top:355.5px;width:1004px;height:238.5px;background:#a9bdd8;border-top:1px solid #d3deeb"></div>
<div class="a" style="left:196.6px;top:359.6px;width:998.8px;height:231.39999999999998px;background:#7f9fcd"></div>
<div class="a" style="left:198.3px;top:359.6px;width:995.5px;height:229.89999999999998px;background:#fff"></div>
<div class="a" style="left:198.3px;top:359.6px;width:995.5px;height:23.4px;background:#2b579a"></div>
<div class="a" style="left:205.8px;top:369.0px;width:11.7px;height:1.8px;background:#0d1a33"></div>
<div class="a" style="left:205.8px;top:372.35px;width:11.7px;height:1.8px;background:#0d1a33"></div>
<div class="a" style="left:205.8px;top:375.7px;width:11.7px;height:1.8px;background:#0d1a33"></div>
<div class="t" style="left:224.6px;top:369.90000000000003px;font-size:8.8px;color:#e0e8f3">Graph 1</div>
<div class="a" style="left:1120.4px;top:369.20000000000005px;width:6px;height:1.5px;background:#b9c8de"></div>
<div class="a" style="left:1148px;top:364.5px;width:8.7px;height:8.4px;border:1.4px solid #a9bcd8;border-top-width:1.9px;background:#36598f"></div>
<svg class="a" style="left:1176.6px;top:364.8px" width="7.2" height="7.2"><path d="M0.6 0.6 L6.6 6.6 M6.6 0.6 L0.6 6.6" stroke="#c5d2e6" stroke-width="1.35"/></svg>
<div class="a" style="left:953px;top:151px;width:233px;height:102px;background:#efefef;border-top:1px solid #b4b4b0"></div>
<div class="a" style="left:206px;top:151.5px;width:747px;height:101.5px;background:#707070"></div><div class="a" style="left:292px;top:153px;width:661px;height:14px;background:#c8c8c8"></div><div class="a" style="left:292px;top:167px;width:661px;height:14px;background:#e1e1e1"></div><div class="a" style="left:292px;top:181px;width:661px;height:14px;background:#dcdcdc"></div><div class="a" style="left:292px;top:195px;width:661px;height:14px;background:#ffffff"></div><div class="a" style="left:292px;top:209px;width:661px;height:15px;background:#ffffff"></div><div class="a" style="left:292px;top:224px;width:661px;height:14px;background:#ffffff"></div><div class="a" style="left:292px;top:238px;width:661px;height:14px;background:#e1e1e1"></div><div class="a" style="left:208px;top:153px;width:84px;height:99px;background:#c8c8c8"></div><div class="a" style="left:208px;top:167px;width:745px;height:1px;background:#9a9a9a"></div><div class="a" style="left:208px;top:181px;width:745px;height:1px;background:#9a9a9a"></div><div class="a" style="left:208px;top:195px;width:745px;height:1px;background:#9a9a9a"></div><div class="a" style="left:208px;top:209px;width:745px;height:1px;background:#9a9a9a"></div><div class="a" style="left:208px;top:224px;width:745px;height:1px;background:#9a9a9a"></div><div class="a" style="left:208px;top:238px;width:745px;height:1px;background:#9a9a9a"></div><div class="a" style="left:206px;top:252px;width:747px;height:1px;background:#9a9a9a"></div><div class="a" style="left:292px;top:153px;width:1px;height:99px;background:#8a8a8a"></div><div class="a" style="left:346px;top:153px;width:1px;height:99px;background:#9a9a9a"></div><div class="a" style="left:402px;top:153px;width:1px;height:99px;background:#9a9a9a"></div><div class="a" style="left:457px;top:153px;width:1px;height:99px;background:#9a9a9a"></div><div class="a" style="left:512px;top:153px;width:1px;height:99px;background:#9a9a9a"></div><div class="a" style="left:568px;top:153px;width:1px;height:99px;background:#9a9a9a"></div><div class="a" style="left:623px;top:153px;width:1px;height:99px;background:#9a9a9a"></div><div class="a" style="left:678px;top:153px;width:1px;height:99px;background:#9a9a9a"></div><div class="a" style="left:733px;top:153px;width:1px;height:99px;background:#9a9a9a"></div><div class="a" style="left:788px;top:153px;width:1px;height:99px;background:#9a9a9a"></div><div class="a" style="left:843px;top:153px;width:1px;height:99px;background:#9a9a9a"></div><div class="a" style="left:898px;top:153px;width:1px;height:99px;background:#9a9a9a"></div><div class="a" style="left:953px;top:153px;width:1px;height:99px;background:#8a8a8a"></div><div class="t" style="left:208px;width:84px;text-align:center;top:156px;font-size:9.4px;font-weight:700;color:#1a1a1a;-webkit-text-stroke:0;transform:scaleY(1.05)">Total</div><div class="t" style="left:293px;width:53px;text-align:center;top:156px;font-size:9.3px;font-weight:700;color:#1a1a1a;-webkit-text-stroke:0;transform:scaleY(1.05)">2018-Jul</div><div class="t" style="left:347px;width:55px;text-align:center;top:156px;font-size:9.3px;font-weight:700;color:#1a1a1a;-webkit-text-stroke:0;transform:scaleY(1.05)">2018-Aug</div><div class="t" style="left:403px;width:54px;text-align:center;top:156px;font-size:9.3px;font-weight:700;color:#1a1a1a;-webkit-text-stroke:0;transform:scaleY(1.05)">2018-Sep</div><div class="t" style="left:458px;width:54px;text-align:center;top:156px;font-size:9.3px;font-weight:700;color:#1a1a1a;-webkit-text-stroke:0;transform:scaleY(1.05)">2018-Oct</div><div class="t" style="left:513px;width:55px;text-align:center;top:156px;font-size:9.3px;font-weight:700;color:#1a1a1a;-webkit-text-stroke:0;transform:scaleY(1.05)">2018-Nov</div><div class="t" style="left:569px;width:54px;text-align:center;top:156px;font-size:9.3px;font-weight:700;color:#1a1a1a;-webkit-text-stroke:0;transform:scaleY(1.05)">2018-Dec</div><div class="t" style="left:624px;width:54px;text-align:center;top:156px;font-size:9.3px;font-weight:700;color:#1a1a1a;-webkit-text-stroke:0;transform:scaleY(1.05)">2019-Jan</div><div class="t" style="left:679px;width:54px;text-align:center;top:156px;font-size:9.3px;font-weight:700;color:#1a1a1a;-webkit-text-stroke:0;transform:scaleY(1.05)">2019-Feb</div><div class="t" style="left:734px;width:54px;text-align:center;top:156px;font-size:9.3px;font-weight:700;color:#1a1a1a;-webkit-text-stroke:0;transform:scaleY(1.05)">2019-Mar</div><div class="t" style="left:789px;width:54px;text-align:center;top:156px;font-size:9.3px;font-weight:700;color:#1a1a1a;-webkit-text-stroke:0;transform:scaleY(1.05)">2019-Apr</div><div class="t" style="left:844px;width:54px;text-align:center;top:156px;font-size:9.3px;font-weight:700;color:#1a1a1a;-webkit-text-stroke:0;transform:scaleY(1.05)">2019-May</div><div class="t" style="left:899px;width:54px;text-align:center;top:156px;font-size:9.3px;font-weight:700;color:#1a1a1a;-webkit-text-stroke:0;transform:scaleY(1.05)">2019-Jun</div><div class="t" style="left:209.5px;top:169px;font-size:9.4px;color:#2a2a2a;-webkit-text-stroke:0">Statistical</div><div class="t" style="left:293px;width:53px;text-align:center;top:169px;font-size:9.6px;color:#2a2a2a;-webkit-text-stroke:0">9,717,017</div><div class="t" style="left:347px;width:55px;text-align:center;top:169px;font-size:9.6px;color:#2a2a2a;-webkit-text-stroke:0">10,554,809</div><div class="t" style="left:403px;width:54px;text-align:center;top:169px;font-size:9.6px;color:#2a2a2a;-webkit-text-stroke:0">11,977,823</div><div class="t" style="left:458px;width:54px;text-align:center;top:169px;font-size:9.6px;color:#2a2a2a;-webkit-text-stroke:0">10,197,671</div><div class="t" style="left:513px;width:55px;text-align:center;top:169px;font-size:9.6px;color:#2a2a2a;-webkit-text-stroke:0">9,703,493</div><div class="t" style="left:569px;width:54px;text-align:center;top:169px;font-size:9.6px;color:#2a2a2a;-webkit-text-stroke:0">13,050,245</div><div class="t" style="left:624px;width:54px;text-align:center;top:169px;font-size:9.6px;color:#2a2a2a;-webkit-text-stroke:0">9,778,346</div><div class="t" style="left:679px;width:54px;text-align:center;top:169px;font-size:9.6px;color:#2a2a2a;-webkit-text-stroke:0">9,095,956</div><div class="t" style="left:734px;width:54px;text-align:center;top:169px;font-size:9.6px;color:#2a2a2a;-webkit-text-stroke:0">11,952,130</div><div class="t" style="left:789px;width:54px;text-align:center;top:169px;font-size:9.6px;color:#2a2a2a;-webkit-text-stroke:0">8,688,876</div><div class="t" style="left:844px;width:54px;text-align:center;top:169px;font-size:9.6px;color:#2a2a2a;-webkit-text-stroke:0">9,401,029</div><div class="t" style="left:899px;width:54px;text-align:center;top:169px;font-size:9.6px;color:#2a2a2a;-webkit-text-stroke:0">10,638,954</div><div class="t" style="left:209.5px;top:183px;font-size:9.4px;color:#2a2a2a;-webkit-text-stroke:0">Inherited overrides</div><div class="t" style="left:209.5px;top:197px;font-size:9.4px;color:#2a2a2a;-webkit-text-stroke:0">Override 1</div><div class="t" style="left:209.5px;top:211px;font-size:9.4px;color:#2a2a2a;-webkit-text-stroke:0">Override 2</div><div class="t" style="left:209.5px;top:226px;font-size:9.4px;color:#2a2a2a;-webkit-text-stroke:0">Override 3</div><div class="t" style="left:209.5px;top:240px;font-size:9.4px;color:#2a2a2a;-webkit-text-stroke:0">Forecast</div><div class="t" style="left:293px;width:53px;text-align:center;top:240px;font-size:9.6px;color:#2a2a2a;-webkit-text-stroke:0">9,717,017</div><div class="t" style="left:347px;width:55px;text-align:center;top:240px;font-size:9.6px;color:#2a2a2a;-webkit-text-stroke:0">10,554,809</div><div class="t" style="left:403px;width:54px;text-align:center;top:240px;font-size:9.6px;color:#2a2a2a;-webkit-text-stroke:0">11,977,823</div><div class="t" style="left:458px;width:54px;text-align:center;top:240px;font-size:9.6px;color:#2a2a2a;-webkit-text-stroke:0">10,197,671</div><div class="t" style="left:513px;width:55px;text-align:center;top:240px;font-size:9.6px;color:#2a2a2a;-webkit-text-stroke:0">9,703,493</div><div class="t" style="left:569px;width:54px;text-align:center;top:240px;font-size:9.6px;color:#2a2a2a;-webkit-text-stroke:0">13,050,245</div><div class="t" style="left:624px;width:54px;text-align:center;top:240px;font-size:9.6px;color:#2a2a2a;-webkit-text-stroke:0">9,778,346</div><div class="t" style="left:679px;width:54px;text-align:center;top:240px;font-size:9.6px;color:#2a2a2a;-webkit-text-stroke:0">9,095,956</div><div class="t" style="left:734px;width:54px;text-align:center;top:240px;font-size:9.6px;color:#2a2a2a;-webkit-text-stroke:0">11,952,130</div><div class="t" style="left:789px;width:54px;text-align:center;top:240px;font-size:9.6px;color:#2a2a2a;-webkit-text-stroke:0">8,688,876</div><div class="t" style="left:844px;width:54px;text-align:center;top:240px;font-size:9.6px;color:#2a2a2a;-webkit-text-stroke:0">9,401,029</div><div class="t" style="left:899px;width:54px;text-align:center;top:240px;font-size:9.6px;color:#2a2a2a;-webkit-text-stroke:0">10,638,954</div>
<div class="t" style="left:212.5px;top:272px;font-size:8.4px;color:#333;font-weight:400;">Formulas</div>
<div class="a" style="left:254px;top:271px;width:10px;height:10px;background:#fff;border:1px solid #555"></div>
<div class="a" style="left:269px;top:268.5px;width:43px;height:14.5px;background:#d2d2d2;border:1px solid #d2d2d2"></div>
<div class="t" style="left:269px;width:43px;text-align:center;top:272.15px;font-size:8.4px;color:#9a9a9a">Percent</div>
<div class="a" style="left:316.7px;top:268.5px;width:45px;height:14.5px;background:#fff;border:1px solid #e0e0e0"></div>
<div class="a" style="left:348.7px;top:269.5px;width:12px;height:12.5px;background:#f3f3f3;border-left:1px solid #e6e6e6"></div>
<svg class="a" style="left:352.2px;top:271px" width="5" height="10"><path d="M0.5 3.5 L4.5 3.5 L2.5 1Z M0.5 6.5 L4.5 6.5 L2.5 9Z" fill="#777"/></svg>
<div class="t" style="left:321.0px;top:272px;font-size:8.4px;color:#999;font-weight:400;">10</div>
<div class="a" style="left:366.7px;top:268.5px;width:43.5px;height:14.5px;background:#d2d2d2;border:1px solid #d2d2d2"></div>
<div class="t" style="left:366.7px;width:43.5px;text-align:center;top:272.15px;font-size:8.4px;color:#9a9a9a">Increment</div>
<div class="a" style="left:415px;top:268.5px;width:45px;height:14.5px;background:#fff;border:1px solid #e0e0e0"></div>
<div class="a" style="left:447px;top:269.5px;width:12px;height:12.5px;background:#f3f3f3;border-left:1px solid #e6e6e6"></div>
<svg class="a" style="left:450.5px;top:271px" width="5" height="10"><path d="M0.5 3.5 L4.5 3.5 L2.5 1Z M0.5 6.5 L4.5 6.5 L2.5 9Z" fill="#777"/></svg>
<div class="t" style="left:419.3px;top:272px;font-size:8.4px;color:#999;font-weight:400;">1</div>
<div class="a" style="left:466px;top:268.5px;width:42.5px;height:14.5px;background:#d2d2d2;border:1px solid #d2d2d2"></div>
<div class="t" style="left:466px;width:42.5px;text-align:center;top:272.15px;font-size:8.4px;color:#9a9a9a">Value</div>
<div class="a" style="left:513.3px;top:267.5px;width:63.5px;height:16.5px;background:#fff;border:1px solid #7a7a7a"></div>
<div class="t" style="left:517px;top:272px;font-size:8.4px;color:#333;font-weight:400;">0</div>
<div class="a" style="left:576.7px;top:268px;width:74px;height:15.5px;background:#e6e6e6;border:1px solid #c8c8c8"></div>
<div class="t" style="left:580px;top:272px;font-size:8.4px;color:#333;font-weight:400;">Override 1</div>
<svg class="a" style="left:641.5px;top:273px" width="7" height="5"><path d="M0.5 0.5 L3.5 3.5 L6.5 0.5" fill="none" stroke="#666" stroke-width="1"/></svg>
<div class="a" style="left:656.7px;top:268.5px;width:42.5px;height:14.5px;background:#d2d2d2;border:1px solid #d2d2d2"></div>
<div class="t" style="left:656.7px;width:42.5px;text-align:center;top:272.15px;font-size:8.4px;color:#9a9a9a">Commit</div>
<div class="a" style="left:705px;top:268.5px;width:42.5px;height:15px;background:#e3e3e3;border:1px solid #b4b4b4"></div>
<div class="t" style="left:705px;width:42.5px;text-align:center;top:272.4px;font-size:8.4px;color:#333">Help</div>
<div class="t" style="left:212px;top:292.5px;font-size:8.4px;color:#b0b0b0;font-weight:400;">Comment:</div>
<div class="a" style="left:255px;top:288.3px;width:395px;height:15px;background:#fff;border:1px solid #e0e0e0"></div>
<div class="t" style="left:659.3px;top:292.5px;font-size:8.4px;color:#333;font-weight:400;">History</div>
<div class="a" style="left:690.7px;top:288.3px;width:105px;height:16px;background:#e6e6e6;border:1px solid #c8c8c8"></div>
<div class="t" style="left:693px;top:292.5px;font-size:8.4px;color:#333;font-weight:400;">None</div>
<svg class="a" style="left:786px;top:294px" width="7" height="5"><path d="M0.5 0.5 L3.5 3.5 L6.5 0.5" fill="none" stroke="#666" stroke-width="1"/></svg>
<div class="a" style="left:800px;top:288.7px;width:10px;height:10px;background:#fff;border:1px solid #555"></div>
<div class="t" style="left:812px;top:291px;font-size:8.7px;color:#333;font-weight:400;">Quarterly totals</div>
<div class="a" style="left:876px;top:288.7px;width:10px;height:10px;background:#fff;border:1px solid #555"></div>
<div class="t" style="left:888px;top:291px;font-size:8.7px;color:#333;font-weight:400;">Yearly totals</div>
<svg class="a" style="left:0;top:0" width="1200" height="612"><style>text{stroke:#222;stroke-width:0.22px}</style><line x1="303.6" y1="429.7" x2="1147.4" y2="429.7" stroke="#e8e8e8" stroke-width="1" stroke-dasharray="1.5 1.5"/><text x="302.1" y="432.7" font-size="8.3" text-anchor="end" fill="#333" font-family="Liberation Sans">500,000</text><line x1="303.6" y1="459.65" x2="1147.4" y2="459.65" stroke="#e8e8e8" stroke-width="1" stroke-dasharray="1.5 1.5"/><text x="302.1" y="462.65" font-size="8.3" text-anchor="end" fill="#333" font-family="Liberation Sans">400,000</text><line x1="303.6" y1="489.6" x2="1147.4" y2="489.6" stroke="#e8e8e8" stroke-width="1" stroke-dasharray="1.5 1.5"/><text x="302.1" y="492.6" font-size="8.3" text-anchor="end" fill="#333" font-family="Liberation Sans">300,000</text><line x1="303.6" y1="519.55" x2="1147.4" y2="519.55" stroke="#e8e8e8" stroke-width="1" stroke-dasharray="1.5 1.5"/><text x="302.1" y="522.55" font-size="8.3" text-anchor="end" fill="#333" font-family="Liberation Sans">200,000</text><text transform="translate(270.8,481.2) rotate(-90)" font-size="9.9" text-anchor="middle" fill="#222" font-family="Liberation Sans">Dollars</text><polyline points="303.60,531 314.56,532.5 325.52,533.75 336.47,534.75 347.43,544.75 358.39,546.5 369.35,541.9 380.31,533.1 391.26,511.9 402.22,529.75 413.18,541.9 424.14,505.6 435.10,528.1 446.05,532.6 457.01,504.7 467.97,518.9 478.93,526.4 489.89,513.4 500.84,510.8 511.80,499.6 522.76,503.5 533.72,508.1 544.68,503.5 555.63,452.5 566.59,505.1 577.55,521.1 588.51,500.1 599.47,532.1 610.42,518.9 621.38,512 632.34,512.4 643.30,512.9 654.26,474.5 665.21,478.4 676.17,500.1 687.13,464.8 698.09,491.5 709.05,507.2 720.00,486.3 730.96,522.4 741.92,520.3 752.88,507.2 763.84,498.8 774.79,481 785.75,469.3 796.71,486.3 807.67,485 818.63,416.2 829.58,490.1 840.54,499.3 851.50,490.1 862.46,514.2 873.42,507.7 884.37,468.5 895.33,501.9 906.29,486.2 917.25,433.4 928.21,457.5 939.16,486.2 950.12,437.9 961.08,466.6 972.04,500.6 983.00,463.2 993.95,501.9 1004.91,491.5 1015.87,490.1" fill="none" stroke="#46c046" stroke-width="2.6" stroke-linejoin="round"/><polyline points="1026.83,496.2 1037.79,488.2 1048.74,456.8 1059.70,467.6 1070.66,481.5 1081.62,431.8 1092.58,475 1103.53,487.6 1114.49,472.6 1125.45,500.9 1136.41,499.1 1147.37,487.6" fill="none" stroke="#a44646" stroke-width="1.7"/><rect x="303.6" y="412.5" width="843.8000000000001" height="137.5" fill="none" stroke="#333" stroke-width="1"/><line x1="1015.87" y1="412.5" x2="1015.87" y2="550" stroke="#444" stroke-width="1.2"/><line x1="314.56" y1="545" x2="314.56" y2="550" stroke="#222" stroke-width="1"/><line x1="325.52" y1="545" x2="325.52" y2="550" stroke="#222" stroke-width="1"/><line x1="336.47" y1="545" x2="336.47" y2="550" stroke="#222" stroke-width="1"/><line x1="347.43" y1="545" x2="347.43" y2="550" stroke="#222" stroke-width="1"/><line x1="358.39" y1="545" x2="358.39" y2="550" stroke="#222" stroke-width="1"/><line x1="369.35" y1="538.5" x2="369.35" y2="550" stroke="#222" stroke-width="1"/><line x1="380.31" y1="545" x2="380.31" y2="550" stroke="#222" stroke-width="1"/><line x1="391.26" y1="545" x2="391.26" y2="550" stroke="#222" stroke-width="1"/><line x1="402.22" y1="545" x2="402.22" y2="550" stroke="#222" stroke-width="1"/><line x1="413.18" y1="545" x2="413.18" y2="550" stroke="#222" stroke-width="1"/><line x1="424.14" y1="545" x2="424.14" y2="550" stroke="#222" stroke-width="1"/><line x1="435.10" y1="538.5" x2="435.10" y2="550" stroke="#222" stroke-width="1"/><line x1="446.05" y1="545" x2="446.05" y2="550" stroke="#222" stroke-width="1"/><line x1="457.01" y1="545" x2="457.01" y2="550" stroke="#222" stroke-width="1"/><line x1="467.97" y1="545" x2="467.97" y2="550" stroke="#222" stroke-width="1"/><line x1="478.93" y1="545" x2="478.93" y2="550" stroke="#222" stroke-width="1"/><line x1="489.89" y1="545" x2="489.89" y2="550" stroke="#222" stroke-width="1"/><line x1="500.84" y1="538.5" x2="500.84" y2="550" stroke="#222" stroke-width="1"/><line x1="511.80" y1="545" x2="511.80" y2="550" stroke="#222" stroke-width="1"/><line x1="522.76" y1="545" x2="522.76" y2="550" stroke="#222" stroke-width="1"/><line x1="533.72" y1="545" x2="533.72" y2="550" stroke="#222" stroke-width="1"/><line x1="544.68" y1="545" x2="544.68" y2="550" stroke="#222" stroke-width="1"/><line x1="555.63" y1="545" x2="555.63" y2="550" stroke="#222" stroke-width="1"/><line x1="566.59" y1="538.5" x2="566.59" y2="550" stroke="#222" stroke-width="1"/><line x1="577.55" y1="545" x2="577.55" y2="550" stroke="#222" stroke-width="1"/><line x1="588.51" y1="545" x2="588.51" y2="550" stroke="#222" stroke-width="1"/><line x1="599.47" y1="545" x2="599.47" y2="550" stroke="#222" stroke-width="1"/><line x1="610.42" y1="545" x2="610.42" y2="550" stroke="#222" stroke-width="1"/><line x1="621.38" y1="545" x2="621.38" y2="550" stroke="#222" stroke-width="1"/><line x1="632.34" y1="538.5" x2="632.34" y2="550" stroke="#222" stroke-width="1"/><line x1="643.30" y1="545" x2="643.30" y2="550" stroke="#222" stroke-width="1"/><line x1="654.26" y1="545" x2="654.26" y2="550" stroke="#222" stroke-width="1"/><line x1="665.21" y1="545" x2="665.21" y2="550" stroke="#222" stroke-width="1"/><line x1="676.17" y1="545" x2="676.17" y2="550" stroke="#222" stroke-width="1"/><line x1="687.13" y1="545" x2="687.13" y2="550" stroke="#222" stroke-width="1"/><line x1="698.09" y1="538.5" x2="698.09" y2="550" stroke="#222" stroke-width="1"/><line x1="709.05" y1="545" x2="709.05" y2="550" stroke="#222" stroke-width="1"/><line x1="720.00" y1="545" x2="720.00" y2="550" stroke="#222" stroke-width="1"/><line x1="730.96" y1="545" x2="730.96" y2="550" stroke="#222" stroke-width="1"/><line x1="741.92" y1="545" x2="741.92" y2="550" stroke="#222" stroke-width="1"/><line x1="752.88" y1="545" x2="752.88" y2="550" stroke="#222" stroke-width="1"/><line x1="763.84" y1="538.5" x2="763.84" y2="550" stroke="#222" stroke-width="1"/><line x1="774.79" y1="545" x2="774.79" y2="550" stroke="#222" stroke-width="1"/><line x1="785.75" y1="545" x2="785.75" y2="550" stroke="#222" stroke-width="1"/><line x1="796.71" y1="545" x2="796.71" y2="550" stroke="#222" stroke-width="1"/><line x1="807.67" y1="545" x2="807.67" y2="550" stroke="#222" stroke-width="1"/><line x1="818.63" y1="545" x2="818.63" y2="550" stroke="#222" stroke-width="1"/><line x1="829.58" y1="538.5" x2="829.58" y2="550" stroke="#222" stroke-width="1"/><line x1="840.54" y1="545" x2="840.54" y2="550" stroke="#222" stroke-width="1"/><line x1="851.50" y1="545" x2="851.50" y2="550" stroke="#222" stroke-width="1"/><line x1="862.46" y1="545" x2="862.46" y2="550" stroke="#222" stroke-width="1"/><line x1="873.42" y1="545" x2="873.42" y2="550" stroke="#222" stroke-width="1"/><line x1="884.37" y1="545" x2="884.37" y2="550" stroke="#222" stroke-width="1"/><line x1="895.33" y1="538.5" x2="895.33" y2="550" stroke="#222" stroke-width="1"/><line x1="906.29" y1="545" x2="906.29" y2="550" stroke="#222" stroke-width="1"/><line x1="917.25" y1="545" x2="917.25" y2="550" stroke="#222" stroke-width="1"/><line x1="928.21" y1="545" x2="928.21" y2="550" stroke="#222" stroke-width="1"/><line x1="939.16" y1="545" x2="939.16" y2="550" stroke="#222" stroke-width="1"/><line x1="950.12" y1="545" x2="950.12" y2="550" stroke="#222" stroke-width="1"/><line x1="961.08" y1="538.5" x2="961.08" y2="550" stroke="#222" stroke-width="1"/><line x1="972.04" y1="545" x2="972.04" y2="550" stroke="#222" stroke-width="1"/><line x1="983.00" y1="545" x2="983.00" y2="550" stroke="#222" stroke-width="1"/><line x1="993.95" y1="545" x2="993.95" y2="550" stroke="#222" stroke-width="1"/><line x1="1004.91" y1="545" x2="1004.91" y2="550" stroke="#222" stroke-width="1"/><line x1="1015.87" y1="545" x2="1015.87" y2="550" stroke="#222" stroke-width="1"/><line x1="1026.83" y1="538.5" x2="1026.83" y2="550" stroke="#222" stroke-width="1"/><line x1="1037.79" y1="545" x2="1037.79" y2="550" stroke="#222" stroke-width="1"/><line x1="1048.74" y1="545" x2="1048.74" y2="550" stroke="#222" stroke-width="1"/><line x1="1059.70" y1="545" x2="1059.70" y2="550" stroke="#222" stroke-width="1"/><line x1="1070.66" y1="545" x2="1070.66" y2="550" stroke="#222" stroke-width="1"/><line x1="1081.62" y1="545" x2="1081.62" y2="550" stroke="#222" stroke-width="1"/><line x1="1092.58" y1="538.5" x2="1092.58" y2="550" stroke="#222" stroke-width="1"/><line x1="1103.53" y1="545" x2="1103.53" y2="550" stroke="#222" stroke-width="1"/><line x1="1114.49" y1="545" x2="1114.49" y2="550" stroke="#222" stroke-width="1"/><line x1="1125.45" y1="545" x2="1125.45" y2="550" stroke="#222" stroke-width="1"/><line x1="1136.41" y1="545" x2="1136.41" y2="550" stroke="#222" stroke-width="1"/><line x1="1147.37" y1="545" x2="1147.37" y2="550" stroke="#222" stroke-width="1"/><text x="303.60" y="559.9" font-size="8.4" text-anchor="middle" fill="#222" font-family="Liberation Sans">2013-Jan</text><text x="369.35" y="559" font-size="7.4" text-anchor="middle" fill="#222" font-family="Liberation Sans">2013-Jul</text><text x="435.10" y="559.9" font-size="8.4" text-anchor="middle" fill="#222" font-family="Liberation Sans">2014-Jan</text><text x="500.84" y="559" font-size="7.4" text-anchor="middle" fill="#222" font-family="Liberation Sans">2014-Jul</text><text x="566.59" y="559.9" font-size="8.4" text-anchor="middle" fill="#222" font-family="Liberation Sans">2015-Jan</text><text x="632.34" y="559" font-size="7.4" text-anchor="middle" fill="#222" font-family="Liberation Sans">2015-Jul</text><text x="698.09" y="559.9" font-size="8.4" text-anchor="middle" fill="#222" font-family="Liberation Sans">2016-Jan</text><text x="763.84" y="559" font-size="7.4" text-anchor="middle" fill="#222" font-family="Liberation Sans">2016-Jul</text><text x="829.58" y="559.9" font-size="8.4" text-anchor="middle" fill="#222" font-family="Liberation Sans">2017-Jan</text><text x="895.33" y="559" font-size="7.4" text-anchor="middle" fill="#222" font-family="Liberation Sans">2017-Jul</text><text x="961.08" y="559.9" font-size="8.4" text-anchor="middle" fill="#222" font-family="Liberation Sans">2018-Jan</text><text x="1026.83" y="559" font-size="7.4" text-anchor="middle" fill="#222" font-family="Liberation Sans">2018-Jul</text><text x="1092.58" y="559.9" font-size="8.4" text-anchor="middle" fill="#222" font-family="Liberation Sans">2019-Jan</text><text x="724.9" y="402.8" font-size="10.7" text-anchor="middle" fill="#2a2a2a" style="stroke:none" font-family="Liberation Sans">Total - Total</text><rect x="609" y="565.6" width="17.4" height="10" fill="#4cc94c"/><text x="632.7" y="575" font-size="10.4" fill="#333" style="stroke:none" font-family="Liberation Sans">History</text><rect x="727.3" y="565.5" width="16.6" height="10" fill="#b02222"/><text x="750.5" y="575" font-size="10.4" fill="#333" style="stroke:none" font-family="Liberation Sans">Forecast</text><path d="M938.5 540 L938.5 549 L940.5 547 L942 550 L943 549.5 L941.7 546.5 L944.5 546.5 Z" fill="#fff" stroke="#555" stroke-width="0.7"/></svg>
</body></html>
